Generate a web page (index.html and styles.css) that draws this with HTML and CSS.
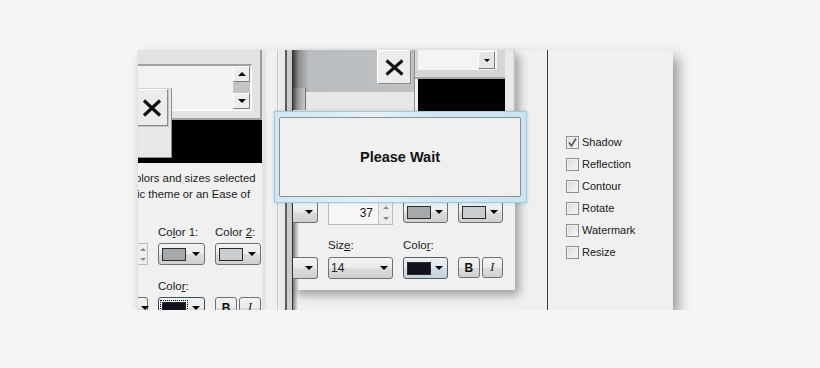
FILE: index.html
```html
<!DOCTYPE html>
<html lang="en">
<head>
  <meta charset="UTF-8" />
  <title>Please Wait</title>
  <link rel="stylesheet" href="styles.css">
</head>
<body>

<div class="shot">

  <!-- left window, cut off by the screenshot edge -->
  <div class="left">
    <div class="lframe">
      <div class="lbox">
        <div class="lscroll">
          <span class="sbtn"><span class="tri up"></span></span>
          <span class="strack"></span>
          <span class="sbtn"><span class="tri down"></span></span>
        </div>
      </div>
    </div>
    <div class="lblack"></div>
    <div class="ltext">
      <div class="line one">olors and sizes selected</div>
      <div class="line two">ic theme or an Ease of</div>
    </div>
    <div class="lgrid">
      <span></span>
      <span class="lbl">Co<u>l</u>or 1:</span>
      <span class="lbl">Color <u>2</u>:</span>

      <div class="spin stub"><span class="tri up small"></span><span class="tri down small"></span></div>
      <div class="dd"><span class="swatch mid-gray"></span><span class="arrow"></span></div>
      <div class="dd"><span class="swatch light-gray"></span><span class="arrow"></span></div>

      <span></span>
      <span class="lbl low">Colo<u>r</u>:</span>
      <span></span>

      <div class="dd stub"><span class="arrow"></span></div>
      <div class="dd focus"><span class="swatch dark"></span><span class="arrow"></span></div>
      <div class="pair"><button class="btn bold">B</button><button class="btn ital">I</button></div>
    </div>

    <div class="xbox">
      <div class="xbtn">
        <svg width="20" height="18" viewBox="0 0 20 18"><path d="M2 1.5 L18 16.5 M18 1.5 L2 16.5" stroke="#111" stroke-width="3.2" fill="none"/></svg>
      </div>
    </div>
  </div>

  <div class="split"></div>

  <!-- middle window -->
  <div class="mid">
    <div class="mwin">
      <div class="mtop">
        <div class="mtl">
          <div class="mgray">
            <div class="xbtn small">
              <svg width="19" height="17" viewBox="0 0 19 17"><path d="M1.5 1.5 L17.5 15.5 M17.5 1.5 L1.5 15.5" stroke="#111" stroke-width="3" fill="none"/></svg>
            </div>
          </div>
          <div class="mlight"><span class="mbar"></span></div>
        </div>
        <div class="mtr">
          <div class="mcombo">
            <div class="mfield"><span class="mfbtn"><span class="arrow tiny"></span></span></div>
          </div>
          <div class="mblack"></div>
        </div>
        <div class="medge"></div>
      </div>

      <div class="mform">
        <div class="dd stub"><span class="arrow"></span></div>
        <div class="spin">
          <span class="val">37</span>
          <span class="spinner"><span class="tri up small"></span><span class="tri down small"></span></span>
        </div>
        <div class="dd"><span class="swatch mid-gray"></span><span class="arrow"></span></div>
        <div class="dd"><span class="swatch light-gray"></span><span class="arrow"></span></div>

        <span></span>
        <span class="lbl">Siz<u>e</u>:</span>
        <span class="lbl">Colo<u>r</u>:</span>
        <span></span>

        <div class="dd stub"><span class="arrow"></span></div>
        <div class="dd text"><span>14</span><span class="arrow"></span></div>
        <div class="dd hot"><span class="swatch dark"></span><span class="arrow"></span></div>
        <div class="pair"><button class="btn bold">B</button><button class="btn ital">I</button></div>
      </div>
    </div>
  </div>

  <!-- effects list -->
  <div class="right">
    <label class="chk"><span class="box"><svg width="11" height="11" viewBox="0 0 11 11"><path d="M2 5.5 L4.5 9 L9 1.5" stroke="#5a5a5a" stroke-width="1.6" fill="none"/></svg></span>Shadow</label>
    <label class="chk"><span class="box"></span>Reflection</label>
    <label class="chk"><span class="box"></span>Contour</label>
    <label class="chk"><span class="box"></span>Rotate</label>
    <label class="chk"><span class="box"></span>Watermark</label>
    <label class="chk"><span class="box"></span>Resize</label>
  </div>

  <div class="wait">
    <div class="wait-inner">Please Wait</div>
  </div>
</div>

</body>
</html>
```

FILE: styles.css
```css
body {
  margin: 0;
  background: #f5f5f5;
  font-family: "Liberation Sans", Arial, sans-serif;
  font-size: 11.5px;
  color: #1a1a1a;
}

.shot {
  position: relative;
  display: flex;
  width: 535px;
  height: 260px;
  margin: 50px 0 0 138px;
  background: #f0f0f0;
  box-shadow: 5px 7px 12px rgba(0,0,0,0.4);
}

/* ---------- left window ---------- */
.left {
  position: relative;
  width: 141px;
  overflow: hidden;
  background: linear-gradient(to right, transparent 124px, #e4e4e4 124px, #e4e4e4 128px, #f0f0f0 128px, #f0f0f0 139px, #c4c4c4 139px, #c4c4c4 140px, #f6f6f6 140px);
}

.lframe {
  width: 124px;
  height: 70px;
  box-sizing: border-box;
  padding-top: 14px;
  background: #e2e2e2;
  border-right: 2px solid #9c9c9c;
  border-bottom: 2px solid #a2a2a2;
}

.lbox {
  display: flex;
  justify-content: flex-end;
  width: 114px;
  height: 47px;
  box-sizing: border-box;
  background: #f2f2f2;
  border-top: 2px solid #a0a0a0;
  border-bottom: 1px solid #fff;
  border-right: 1px solid #fff;
  padding: 0 1px 1px 0;
}

.lscroll {
  display: flex;
  flex-direction: column;
  width: 17px;
}

.strack { flex: 1; background: #c4c4c4; }

.sbtn {
  display: flex;
  align-items: center;
  justify-content: center;
  height: 14px;
  background: #ededed;
  border: 1px solid;
  border-color: #fff #7e7e7e #7e7e7e #fff;
}

.tri { width: 0; height: 0; border-left: 4px solid transparent; border-right: 4px solid transparent; }
.tri.up { border-bottom: 4px solid #000; }
.tri.down { border-top: 4px solid #000; }
.tri.small { border-left-width: 3px; border-right-width: 3px; }
.tri.small.up { border-bottom: 3px solid #8a8a8a; }
.tri.small.down { border-top: 3px solid #8a8a8a; }

.lblack { width: 124px; height: 43px; background: #000; }

.ltext { margin-top: 7px; line-height: 16px; white-space: nowrap; font-size: 11.3px; }
.ltext .one { margin-left: -3px; }
.ltext .two { margin-left: -1px; }

.lgrid {
  display: grid;
  grid-template-columns: 10px 47px 46px;
  grid-template-rows: 14px 22px auto 22px;
  column-gap: 10px;
  row-gap: 4px;
  margin-top: 23px;
}

.lbl { line-height: 14px; white-space: nowrap; }
.lbl.low { margin-top: 10px; }

.xbox {
  position: absolute;
  left: -4px;
  top: 38px;
  width: 38px;
  height: 70px;
  box-sizing: border-box;
  background: #e8e8e8;
  border: 1px solid;
  border-color: #d0d0d0 #8c8c8c #8c8c8c #d0d0d0;
}

.xbtn {
  display: flex;
  align-items: center;
  justify-content: center;
  width: 33px;
  height: 37px;
  box-sizing: border-box;
  background: #ececec;
  border: 1px solid;
  border-color: #fff #8a8a8a #8a8a8a #fff;
  box-shadow: 1px 1px 0 #c4c4c4;
}

.xbtn.small { width: 34px; height: 34px; }

/* ---------- split between windows ---------- */
.split {
  width: 14px;
  background: linear-gradient(to right, #e9e9e9 0, #e9e9e9 6px, #5c5c5c 6px, #5c5c5c 8px, #cfcfcf 8px, #cfcfcf 13px, #333 13px);
}

/* ---------- middle window ---------- */
.mid {
  width: 254px;
  background: linear-gradient(to right, rgba(0,0,0,0.45), rgba(0,0,0,0) 5px), #f0f0f0;
}

.mwin {
  width: 222px;
  height: 240px;
  background: linear-gradient(to right, rgba(0,0,0,0.5), rgba(0,0,0,0) 6px), #f0f0f0;
  box-shadow: 4px 5px 9px rgba(0,0,0,0.35);
}

.mtop { display: flex; height: 65px; }

.mtl { display: flex; flex-direction: column; width: 122px; }

.mgray {
  display: flex;
  justify-content: flex-end;
  height: 42px;
  padding-right: 3px;
  background: linear-gradient(to right, #3c3c3c 0, #8d9093 6px, #b9bdc0 16px, #bcc0c3);
  border-right: 1px solid #8e8e8e;
}

.mlight { flex: 1; background: #e7e7e7; border-right: 1px solid #8e8e8e; }

.mbar {
  display: block;
  width: 12px;
  height: 22px;
  margin-top: -4px;
  background: linear-gradient(to right, #4a4a4a, #9a9a9a 5px, #c9c9c9);
  border-right: 1px solid #6f6f6f;
}

.mtr { display: flex; flex-direction: column; width: 90px; }

.mcombo {
  height: 29px;
  box-sizing: border-box;
  padding: 0 8px 0 3px;
  background: #d6d6d6;
  border-bottom: 2px solid #a8a8a8;
}

.mfield {
  display: flex;
  justify-content: flex-end;
  align-items: center;
  height: 20px;
  padding-right: 2px;
  background: #f4f4f4;
}

.mfbtn {
  display: flex;
  align-items: center;
  justify-content: center;
  width: 15px;
  height: 16px;
  background: #e6e6e6;
  border: 1px solid;
  border-color: #fff #7e7e7e #7e7e7e #fff;
}

.mblack { flex: 1; margin-left: 3px; background: #000; }

.medge { flex: 1; background: linear-gradient(to right, #e9e9e9 80%, #bdbdbd); }

.mform {
  display: grid;
  grid-template-columns: 25px 65px 45px 45px;
  grid-template-rows: 24px 32px 22px;
  column-gap: 10px;
  padding-top: 86px;
}

.mform .lbl { align-self: end; margin-bottom: 5px; }

/* ---------- controls ---------- */
.dd {
  display: flex;
  align-items: center;
  height: 22px;
  box-sizing: border-box;
  padding: 0 4px 0 3px;
  border: 1px solid #707070;
  border-radius: 3px;
  background: linear-gradient(#f3f3f3, #ebebeb 50%, #dddddd 51%, #cfcfcf);
}

.dd.stub { border-left: none; border-radius: 0 3px 3px 0; }
.dd.text { padding-left: 2px; font-size: 12px; }
.dd.hot { border-color: #4a5f70; background: linear-gradient(#edf1f4, #e2e8ec 50%, #d3dce2 51%, #c6d0d7); }
.dd.focus { border-color: #3c4f60; }
.dd.focus .swatch { outline: 1px dotted #000; outline-offset: 1px; }

.arrow {
  margin-left: auto;
  width: 0;
  height: 0;
  border-left: 4px solid transparent;
  border-right: 4px solid transparent;
  border-top: 4px solid #000;
}

.arrow.tiny { margin: 0; border-left-width: 3px; border-right-width: 3px; border-top-width: 3px; }

.swatch { width: 24px; height: 13px; box-sizing: border-box; border: 1px solid #2a2a2a; }
.swatch.mid-gray { background: #a6a9ac; }
.swatch.light-gray { background: #cacdd0; }
.swatch.dark { background: #12121f; }

.spin {
  display: flex;
  align-items: stretch;
  height: 24px;
  box-sizing: border-box;
  background: #f6f6f6;
  border: 1px solid #bcbcbc;
  font-size: 12px;
}

.spin .val { flex: 1; text-align: right; padding-right: 5px; line-height: 22px; }

.spinner, .spin.stub {
  display: flex;
  flex-direction: column;
  align-items: center;
  justify-content: space-around;
  width: 13px;
  border-left: 1px solid #c8c8c8;
  background: #ededed;
}

.spin.stub { width: auto; height: 22px; border-left: none; }

.pair { display: flex; gap: 2px; }

.btn {
  width: 22px;
  height: 21px;
  padding: 0;
  border: 1px solid #707070;
  border-radius: 3px;
  background: linear-gradient(#f3f3f3, #ebebeb 50%, #dddddd 51%, #cfcfcf);
  font-family: "Liberation Sans", Arial, sans-serif;
  font-size: 12px;
  color: #111;
}

.btn.bold { font-weight: bold; }
.btn.ital { font-style: italic; font-family: "Liberation Serif", serif; }

/* ---------- right panel ---------- */
.right {
  width: 126px;
  padding: 81px 0 0 18px;
  box-sizing: border-box;
  border-left: 1px solid #3a3a3a;
  font-size: 11px;
}

.chk { display: flex; align-items: center; gap: 3px; height: 22px; }

.box {
  display: flex;
  align-items: center;
  justify-content: center;
  width: 13px;
  height: 13px;
  box-sizing: border-box;
  border: 1px solid #8e8f8f;
  background: linear-gradient(135deg, #d9d9d9, #f7f7f7);
  box-shadow: inset 0 0 0 1px #f2f2f2;
}

/* ---------- Please Wait overlay ---------- */
.wait {
  position: absolute;
  left: 136px;
  top: 61px;
  width: 253px;
  height: 92px;
  box-sizing: border-box;
  padding: 5px 5px 5px 4px;
  border: 1px solid #9ccbe3;
  background: linear-gradient(to right, #cfe6f2, #e4f2f9 40%, #d2e9f4 60%, #c9e3f0);
  box-shadow: 0 0 3px rgba(0,0,0,0.15);
}

.wait-inner {
  display: flex;
  align-items: center;
  justify-content: center;
  height: 80px;
  box-sizing: border-box;
  border: 1px solid #8e8f8f;
  border-radius: 2px;
  background: #f0f0f0;
  font-size: 14.5px;
  font-weight: bold;
  color: #111;
}
```
